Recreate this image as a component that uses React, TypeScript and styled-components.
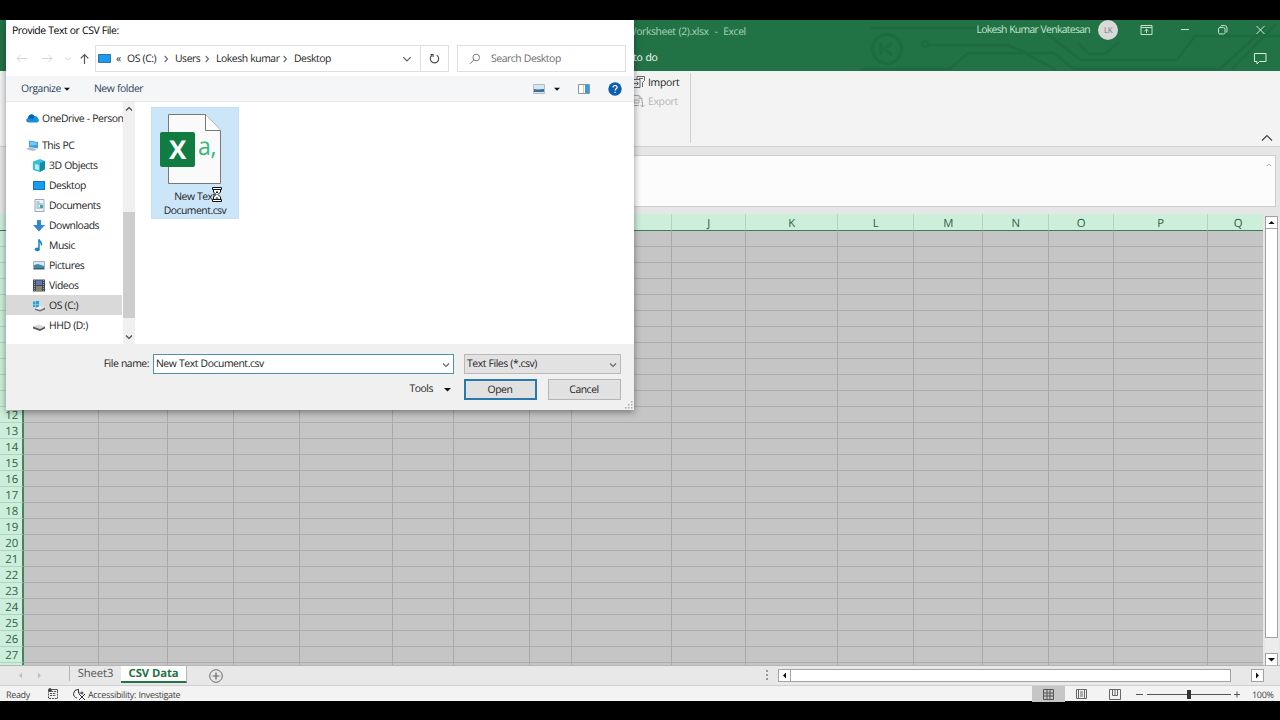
import React from "react";
import styled, { createGlobalStyle } from "styled-components";

const Global = createGlobalStyle`
  * { box-sizing: border-box; }
  html, body { margin: 0; padding: 0; background: #000; }
  body {
    font-family: "Open Sans", "Noto Sans", sans-serif;
    font-size: 10.4px;
    letter-spacing: -0.45px;
    word-spacing: 0.4px;
    text-rendering: geometricPrecision;
    color: #222;
    overflow: hidden;
  }
`;

const Screen = styled.div`
  position: relative;
  width: 1280px;
  height: 720px;
  padding: 20px 0 19px;
  background: #000;
  overflow: hidden;
`;
const Workbook = styled.div`
  display: flex;
  flex-direction: column;
  height: 681px;
  background: #e6e6e6;
`;

/* title bar and ribbon */
const Header = styled.header`
  position: relative;
  flex: none;
  height: 51px;
  background: #217346;
  color: #c5e3cf;
  overflow: hidden;
`;
const Circuit = styled.svg`
  position: absolute;
  inset: 0 0 auto auto;
`;
const TitleRow = styled.div`
  position: relative;
  display: flex;
  align-items: center;
  height: 20px;
  padding: 0 13px 0 627px;
`;
const FileTitle = styled.span`
  flex: 1;
  padding-top: 3px;
  color: #a9d3b9;
  letter-spacing: -0.4px;
  word-spacing: 0.6px;
  white-space: pre;
`;
const Account = styled.span`
  margin-right: 8px;
  letter-spacing: -0.68px;
  white-space: nowrap;
`;
const Avatar = styled.span`
  width: 20px;
  height: 20px;
  margin-right: 22px;
  border-radius: 50%;
  background: #d9d9d9;
  color: #777;
  font-size: 8px;
  line-height: 21px;
  text-align: center;
`;
const WindowIcons = styled.div`
  display: flex;
  gap: 26px;
  svg { display: block; }
`;
const TabRow = styled.div`
  position: relative;
  display: flex;
  align-items: center;
  justify-content: space-between;
  height: 31px;
  padding: 5px 13px 0 633px;
  color: #fff;
  line-height: 14px;
  letter-spacing: -0.2px;
`;
const Ribbon = styled.section`
  flex: none;
  display: flex;
  justify-content: space-between;
  height: 76px;
  padding: 2px 7px 4px 633px;
  background: #f3f3f3;
  border-bottom: 1px solid #d2d2d2;
`;
const RibbonGroup = styled.div`
  width: 58px;
  height: 70px;
  border-right: 1px solid #cfcfcf;
`;
const RibbonButton = styled.div<{ $off?: boolean }>`
  display: flex;
  align-items: center;
  gap: 3px;
  height: 19px;
  color: ${(p) => (p.$off ? "#b3b3b3" : "#222")};
  letter-spacing: -0.3px;
`;
const Collapse = styled.div`
  align-self: flex-end;
  height: 8px;
  svg { display: block; }
`;
const FormulaBar = styled.section`
  flex: none;
  height: 52px;
  margin: 8px 4px 7px 6px;
  padding: 6px 3px;
  display: flex;
  justify-content: flex-end;
  background: #fcfcfc;
  border: 1px solid #cdcdcd;
`;

/* sheet */
const SheetArea = styled.section`
  flex: none;
  display: flex;
  height: 451px;
`;
const Sheet = styled.div`
  width: 1263px;
  height: 451px;
  overflow: hidden;
`;
const Row = styled.div<{ $h?: number }>`
  display: grid;
  grid-template-columns: 24px 75px 69px 66px 66px 93px 61px 76px 42px 100px 74px 92px 76px 69px 66px 65px 94px 56px;
  grid-template-rows: ${(p) => p.$h ?? 16}px;
`;
const ColumnHead = styled.div`
  border-right: 1px solid #b4d3c1;
  border-bottom: 1px solid #3a7d57;
  background: #cdeedb;
  color: #2d5f45;
  font-size: 11.3px;
  line-height: 20px;
  text-align: center;
  &:last-child { padding-left: 5px; }
`;
const RowHead = styled.div`
  height: 16px;
  padding-right: 4px;
  border-right: 2px solid #43845c;
  border-bottom: 1px solid #aed5bf;
  background: #cdeedb;
  color: #2d5f45;
  font-size: 11.4px;
  letter-spacing: -0.2px;
  line-height: 18px;
  text-align: right;
`;
const Cell = styled.div`
  border-right: 1px solid #a9a9a9;
  border-bottom: 1px solid #adadad;
  background: #c5c5c5;
`;
const VScroll = styled.div`
  display: flex;
  flex-direction: column;
  width: 14px;
  margin: 2px 0 0 2px;
  background: #ececec;
`;
const ScrollButton = styled.div`
  display: flex;
  flex: none;
  align-items: center;
  justify-content: center;
  width: 13px;
  height: 13px;
  border: 1px solid #a3a3a3;
  background: #fff;
`;
const VThumb = styled.div`
  flex: none;
  width: 13px;
  height: 409px;
  margin-bottom: 15px;
  border: 1px solid #a3a3a3;
  border-top: 0;
  background: #fff;
`;

/* sheet tabs and status */
const SheetTabs = styled.nav`
  flex: none;
  display: flex;
  height: 20px;
  padding-left: 19px;
  background: #e8e8e8;
  border-top: 1px solid #b5b5b5;
  color: #555;
`;
const TabArrows = styled.div`
  width: 51px;
  padding-top: 6px;
  border-right: 1px solid #b5b5b5;
  height: 15px;
  svg { display: block; }
`;
const Tab = styled.div<{ $active?: boolean }>`
  width: ${(p) => (p.$active ? "66px" : "51px")};
  height: ${(p) => (p.$active ? "17px" : "16px")};
  background: ${(p) => (p.$active ? "#fff" : "transparent")};
  border-right: ${(p) => (p.$active ? "1px solid #b5b5b5" : "0")};
  border-bottom: ${(p) => (p.$active ? "2px solid #217346" : "0")};
  color: ${(p) => (p.$active ? "#217346" : "#555")};
  font-size: 11.3px;
  letter-spacing: -0.15px;
  font-weight: ${(p) => (p.$active ? 700 : 400)};
  line-height: 16px;
  text-align: center;
  white-space: nowrap;
`;
const AddSheet = styled.div`
  flex: 1;
  padding: 3px 0 0 22px;
  svg { display: block; }
`;
const HScroll = styled.div`
  display: flex;
  width: 514px;
  padding-top: 3px;
  svg { display: block; }
`;
const Grip = styled.div`
  width: 12px;
  padding-top: 1px;
`;
const HThumb = styled.div`
  width: 440px;
  height: 13px;
  margin-right: 20px;
  border: 1px solid #a3a3a3;
  border-left: 0;
  background: #fff;
`;
const Status = styled.footer`
  flex: none;
  display: flex;
  align-items: center;
  height: 16px;
  padding: 0 6px;
  background: #f3f3f3;
  border-top: 1px solid #d0d0d0;
  color: #444;
  font-size: 9px;
  letter-spacing: -0.33px;
  line-height: 14px;
  svg { display: block; }
`;
const StatusText = styled.span<{ $w: number }>`
  width: ${(p) => p.$w}px;
  padding-top: 2px;
  white-space: nowrap;
`;
const Spacer = styled.div`
  flex: 1;
`;
const ViewButton = styled.div<{ $on?: boolean }>`
  display: flex;
  align-items: center;
  justify-content: center;
  width: 33px;
  height: 16px;
  padding-top: 2px;
  background: ${(p) => (p.$on ? "#c6c6c6" : "transparent")};
`;
const Zoom = styled.div`
  width: 121px;
  padding: 2px 0 0 5px;
`;

/* file dialog */
const Dialog = styled.div`
  position: absolute;
  left: 6px;
  top: 20px;
  display: flex;
  flex-direction: column;
  width: 628px;
  height: 390px;
  background: #fff;
  box-shadow: 0 2px 7px rgba(0, 0, 0, 0.42);
  color: #222;
`;
const DialogTitle = styled.div`
  flex: none;
  height: 25px;
  padding: 3px 6px;
  color: #000;
  line-height: 16px;
`;
const NavBar = styled.div`
  flex: none;
  display: flex;
  height: 27px;
  margin-bottom: 4px;
  padding: 0 8px 0 10px;
`;
const NavArrows = styled.div`
  width: 79px;
  svg { display: block; }
`;
const Address = styled.div`
  display: flex;
  align-items: center;
  width: 354px;
  border: 1px solid #dedede;
  padding-left: 2px;
`;
const Crumbs = styled.div`
  display: flex;
  flex: 1;
  align-items: center;
  margin-left: 5px;
  line-height: 14px;
  white-space: nowrap;
  color: #222;
`;
const Crumb = styled.span<{ $w: number }>`
  width: ${(p) => p.$w}px;
`;
const Refresh = styled.div`
  display: flex;
  align-items: center;
  justify-content: center;
  width: 28px;
  height: 27px;
  border-left: 1px solid #dedede;
`;
const Search = styled.div`
  display: flex;
  flex: 1;
  align-items: center;
  gap: 10px;
  margin-left: 8px;
  padding-left: 11px;
  border: 1px solid #dedede;
  color: #6b6b6b;
`;
const Toolbar = styled.div`
  flex: none;
  display: flex;
  align-items: center;
  height: 26px;
  padding: 1px 12px 0 15px;
  background: #f5f6f7;
  border-bottom: 1px solid #e5e6e7;
  color: #2a4358;
`;
const ToolText = styled.span<{ $w: number }>`
  display: flex;
  align-items: center;
  gap: 3px;
  width: ${(p) => p.$w}px;
  white-space: nowrap;
`;
const ToolIcons = styled.div`
  display: flex;
  align-items: center;
  margin-left: auto;
`;
const Gap = styled.span<{ $w: number }>`
  width: ${(p) => p.$w}px;
`;
const Content = styled.div`
  display: flex;
  flex: none;
  height: 242px;
`;
const Tree = styled.div`
  width: 117px;
  padding: 6px 1px 0 0;
`;
const TreeItem = styled.div<{ $root?: boolean; $on?: boolean; $after?: number }>`
  display: flex;
  align-items: center;
  gap: 3px;
  height: 20px;
  margin-bottom: ${(p) => p.$after ?? 0}px;
  padding-top: 2px;
  padding-left: ${(p) => (p.$root ? 20 : 27)}px;
  background: ${(p) => (p.$on ? "#d9d9d9" : "transparent")};
  line-height: 14px;
  white-space: nowrap;
  svg {
    flex: none;
    margin-top: -1px;
  }
`;
const TreeScroll = styled.div`
  display: flex;
  flex-direction: column;
  justify-content: space-between;
  align-items: center;
  width: 12px;
  padding: 3px 0;
  background: #f0f0f0;
`;
const TreeThumb = styled.div`
  width: 12px;
  height: 106px;
  margin-top: 84px;
  background: #cdcdcd;
`;
const Files = styled.div`
  flex: 1;
  padding: 5px 0 0 16px;
`;
const FileTile = styled.div`
  position: relative;
  width: 88px;
  height: 112px;
  padding-top: 5px;
  border: 1px solid #c3e0f7;
  background: #cbe5f9;
  text-align: center;
  line-height: 13.5px;
  svg { display: block; }
`;
const FileName = styled.div`
  margin-top: 6px;
  letter-spacing: -0.5px;
`;
const Hourglass = styled.svg`
  position: absolute;
  left: 60px;
  top: 79px;
`;
const DialogFoot = styled.div`
  position: relative;
  display: flex;
  flex: 1;
  flex-direction: column;
  gap: 5px;
  padding: 10px 13px 0 0;
  background: #f0f0f0;
`;
const FootRow = styled.div`
  display: flex;
  justify-content: flex-end;
  align-items: center;
  line-height: 15px;
`;
const Field = styled.div<{ $w: number; $grey?: boolean }>`
  display: flex;
  align-items: center;
  justify-content: space-between;
  width: ${(p) => p.$w}px;
  height: 20px;
  margin-left: ${(p) => (p.$grey ? 10 : 4)}px;
  padding: 1px 3px 0 2px;
  border: 1px solid ${(p) => (p.$grey ? "#b9b9b9" : "#4d93ab")};
  background: ${(p) => (p.$grey ? "#e2e2e2" : "#fff")};
`;
const Button = styled.div<{ $primary?: boolean }>`
  width: 73px;
  height: 21px;
  margin-left: 11px;
  padding-right: 1px;
  border: ${(p) => (p.$primary ? "2px solid #2b78ad" : "1px solid #b5b5b5")};
  background: #e1e1e1;
  line-height: ${(p) => (p.$primary ? 18 : 20)}px;
  text-align: center;
`;
const Resize = styled.svg`
  position: absolute;
  right: 1px;
  bottom: 1px;
`;

const Chevron = ({ dir = "down", size = 8, color = "#666" }: { dir?: "down" | "up" | "right"; size?: number; color?: string }) => {
  const d = { down: "M1 2.5L4 5.5L7 2.5", up: "M1 5.5L4 2.5L7 5.5", right: "M2.7 1L5.5 4L2.7 7" }[dir];
  return (
    <svg width={size} height={size} viewBox="0 0 8 8" fill="none" stroke={color} strokeWidth="1.1">
      <path d={d} />
    </svg>
  );
};
const Caret = ({ dir = "down", color = "#111", size = 7 }: { dir?: "down" | "up" | "left" | "right"; color?: string; size?: number }) => {
  const d = { down: "M0 2h7L3.5 5.5z", up: "M0.5 5h6L3.5 2z", left: "M5 0.5v6L2 3.5z", right: "M2 0.5v6L5 3.5z" }[dir];
  return (
    <svg width={size} height={size} viewBox="0 0 7 7" fill={color}>
      <path d={d} />
    </svg>
  );
};

const treeIcons: Record<string, React.ReactNode> = {
  cloud: (
    <>
      <path d="M3 10.500C-.5 10.500-.8 6.700 2 6.200 2.400 3 5.800 1.500 8 4c2.400-.3 3.600.9 4 2.500 1.500.8 1.200 4-1.100 4z" fill="#1490df" />
      <path d="M2 6.200C2.400 2.300 6.200 1 8.300 3.900L7 7.500z" fill="#0364b8" />
    </>
  ),
  pc: (
    <>
      <path d="M3 1.500l9 1.500v6.500L3 8z" fill="#3ba0dc" />
      <path d="M4 2.500l7 1.200v2L4 6.500z" fill="#77c8f0" />
      <path d="M0 10l4-2 7 2.500-4 1.800z" fill="#b5bec6" />
    </>
  ),
  cube: (
    <>
      <path d="M0 2.500L7 0l5 2v8l-5 3-7-2z" fill="#37c0dc" />
      <path d="M7 4l5-2v8l-5 3z" fill="#1689a8" />
      <path d="M2 5l4 1v5l-4-1z" fill="#b5eff8" />
    </>
  ),
  desktop: (
    <>
      <path d="M0 2h12v9H0z" fill="#0a76c8" />
      <path d="M1 3h10v7H1z" fill="#1a9bf0" />
    </>
  ),
  doc: (
    <>
      <path d="M2 .5h9v12H2z" fill="#eef4f7" stroke="#97a9b4" />
      <path d="M3.500 3h3M3.500 5h6M3.500 7h2M3.500 9h6" stroke="#6c9fb5" />
      <path d="M7 6h3v3H7z" fill="#4ba3a8" />
    </>
  ),
  down: <path d="M4 1h4v5h4l-6 6.500L0 6h4z" fill="#3387cc" />,
  music: (
    <>
      <path d="M6 .5c.5 2.500 3.500 3 2.500 6" fill="none" stroke="#1583c4" strokeWidth="1.600" />
      <path d="M6 .5v9" stroke="#1583c4" strokeWidth="1.500" />
      <ellipse cx="4.300" cy="10.300" rx="2.500" ry="1.900" fill="#1583c4" />
    </>
  ),
  picture: (
    <>
      <path d="M.5 2.500h11v8H.5z" fill="#d6eaf5" stroke="#a3b3bd" />
      <path d="M1 6l4-1 6 2v3H1z" fill="#4a88a8" />
      <path d="M1 9h10v1H1z" fill="#2d5f79" />
    </>
  ),
  video: (
    <>
      <path d="M0 .5h12v12H0z" fill="#3d4a5c" />
      <path d="M3 1.500h6v4.500H3z" fill="#6475a8" />
      <path d="M3 7h6v5H3z" fill="#8d8068" />
      <path d="M1.500 1v11M10.500 1v11" stroke="#9aa2ae" strokeDasharray="1 1" />
    </>
  ),
  os: (
    <>
      <path d="M0 2.500h2.500v2.500H0zM3 2h3v3H3zM0 5.500h2.500V8H0zM3 5.500h3v3H3z" fill="#20a4dd" />
      <path d="M2 9.500l5-2.500 5 1.500v2L7 12z" fill="#e8ecf0" />
      <path d="M2 9.500L7 11l5-2.500v2L7 12.500 2 11z" fill="#66727a" />
    </>
  ),
  drive: (
    <>
      <path d="M0 7.500L5 5.500l7 2-5 2.500z" fill="#d8d8d8" />
      <path d="M0 7.500L7 10l5-2.500v2L7 12 0 9.500z" fill="#595959" />
    </>
  ),
};
const TreeIcon = ({ name }: { name: string }) => (
  <svg width="13" height="13" viewBox="0 0 13 13">
    {treeIcons[name]}
  </svg>
);

const tree = [
  { icon: "cloud", label: "OneDrive - Person", root: true, after: 7 },
  { icon: "pc", label: "This PC", root: true },
  { icon: "cube", label: "3D Objects" },
  { icon: "desktop", label: "Desktop" },
  { icon: "doc", label: "Documents" },
  { icon: "down", label: "Downloads" },
  { icon: "music", label: "Music" },
  { icon: "picture", label: "Pictures" },
  { icon: "video", label: "Videos" },
  { icon: "os", label: "OS (C:)", on: true },
  { icon: "drive", label: "HHD (D:)" },
];
const crumbs = [
  { label: "OS (C:)", w: 35 },
  { label: "Users", w: 28 },
  { label: "Lokesh kumar", w: 65 },
];
const columns = "ABCDEFGHIJKLMNOPQ".split("");
const rows = Array.from({ length: 28 }, (_, i) => i + 1);

const FileDialog = () => (
  <Dialog>
    <DialogTitle>Provide Text or CSV File:</DialogTitle>
    <NavBar>
      <NavArrows>
        <svg width="79" height="27" viewBox="0 0 79 27" fill="none" stroke="#d5d5d5">
          <path d="M11 13.500H1M4.500 10L1 13.500l3.500 3.500M26 13.500h10M32.500 10l3.500 3.500-3.500 3.500" />
          <path d="M49 12.500l3 2.500 3-2.500" />
          <path d="M68.500 19V9.500M64.700 13.300l3.800-3.800 3.800 3.800" stroke="#555" strokeWidth="1.200" />
        </svg>
      </NavArrows>
      <Address>
        <svg width="13" height="10" viewBox="0 0 13 10">
          <path d="M.5.5h12v8H.5z" fill="#1a9bf0" stroke="#3274a0" />
        </svg>
        <Crumbs>
          <Gap $w={11}>«</Gap>
          {crumbs.map((c) => (
            <React.Fragment key={c.label}>
              <Crumb $w={c.w}>{c.label}</Crumb>
              <Chevron dir="right" />
              <Gap $w={5} />
            </React.Fragment>
          ))}
          <span>Desktop</span>
        </Crumbs>
        <Chevron size={10} />
        <Gap $w={8} />
        <Refresh>
          <svg width="11" height="11" viewBox="0 0 11 11" fill="none" stroke="#444" strokeWidth="1.100">
            <path d="M7.600 2.100a4.200 4.200 0 1 1-4.600.2M1.500 1.500h2.600v2.600" />
          </svg>
        </Refresh>
      </Address>
      <Search>
        <svg width="12" height="12" viewBox="0 0 12 12" fill="none" stroke="#777">
          <circle cx="7.200" cy="4.500" r="3.300" />
          <path d="M4.800 7L1 10.800" />
        </svg>
        Search Desktop
      </Search>
    </NavBar>
    <Toolbar>
      <ToolText $w={73}>Organize <Caret size={6} /></ToolText>
      <ToolText $w={60}>New folder</ToolText>
      <ToolIcons>
        <svg width="12" height="10" viewBox="0 0 12 10">
          <path d="M.5.5h11v9H.5z" fill="#d6e8f3" stroke="#b0bdc6" />
          <path d="M1 5l4 .5 6-.5v3H1z" fill="#3d6f92" />
        </svg>
        <Gap $w={9} />
        <Caret size={6} />
        <Gap $w={18} />
        <svg width="12" height="10" viewBox="0 0 12 10">
          <path d="M.5.5h11v9H.5z" fill="#fff" stroke="#8798a5" />
          <path d="M7 1h4v8H7z" fill="#3b9bdc" />
          <path d="M5 1h1v8H5z" fill="#e4c9a2" />
        </svg>
        <Gap $w={18} />
        <svg width="14" height="14" viewBox="0 0 14 14">
          <circle cx="7" cy="7" r="6.700" fill="#0c5fae" />
          <path d="M5 5.500c0-2.800 4.200-2.500 4.100-.1C9 6.800 7.100 6.900 7.100 8.500M7.100 9.800v1.300" fill="none" stroke="#fff" strokeWidth="1.200" />
        </svg>
      </ToolIcons>
    </Toolbar>
    <Content>
      <Tree>
        {tree.map((t) => (
          <TreeItem key={t.label} $root={t.root} $on={t.on} $after={t.after}>
            <TreeIcon name={t.icon} />
            {t.label}
          </TreeItem>
        ))}
      </Tree>
      <TreeScroll>
        <Chevron dir="up" color="#444" />
        <TreeThumb />
        <Chevron color="#444" />
      </TreeScroll>
      <Files>
        <FileTile>
          <svg width="86" height="72" viewBox="0 0 86 72">
            <path d="M16.500 1.500h37l15 16v53h-52z" fill="#fafafa" stroke="#777" />
            <path d="M53.500 1.500v16h15" fill="#fff" stroke="#777" />
            <rect x="8" y="19" width="35" height="35" rx="2" fill="#107c41" />
            <text x="25.500" y="45.500" fill="#fff" fontSize="26" fontWeight="700" textAnchor="middle">X</text>
            <text x="46" y="42" fill="#33b878" fontSize="25" textLength="18" lengthAdjust="spacingAndGlyphs">a,</text>
          </svg>
          <FileName>New Text<br />Document.csv</FileName>
          <Hourglass width="10" height="15" viewBox="0 0 10 15">
            <path d="M.5.5h9v2h-1v2.500L6 7.500l2.500 2.500v2.500h1v2h-9v-2h1v-2.500L4 7.500 1.500 5v-2.500h-1z" fill="#fff" stroke="#111" />
            <path d="M1 2.500h8M1 12.500h8M4 11.500l1-1 1 1M4 5h2L5 6z" fill="#111" stroke="#111" />
          </Hourglass>
        </FileTile>
      </Files>
    </Content>
    <DialogFoot>
      <FootRow>
        File name:
        <Field $w={301}>New Text Document.csv <Chevron /></Field>
        <Field $w={157} $grey>Text Files (*.csv) <Chevron /></Field>
      </FootRow>
      <FootRow>
        Tools
        <Gap $w={11} />
        <Caret />
        <Gap $w={2} />
        <Button $primary>Open</Button>
        <Button>Cancel</Button>
      </FootRow>
      <Resize width="8" height="8" viewBox="0 0 8 8" fill="#aaa">
        <path d="M6 0h1.500v1.500H6zM6 3h1.500v1.500H6zM6 6h1.500v1.500H6zM3 3h1.500v1.500H3zM3 6h1.500v1.500H3zM0 6h1.500v1.500H0z" />
      </Resize>
    </DialogFoot>
  </Dialog>
);

const App = () => (
  <>
    <Global />
    <Screen>
      <Workbook>
        <Header>
          <Circuit width="420" height="51" viewBox="860 20 420 51" fill="none" stroke="#1d6b3f" strokeWidth="2.500">
            <circle cx="887" cy="49" r="14.500" strokeWidth="3" />
            <path d="M881 43v12M892 43l-8 6 8 6" strokeWidth="3" />
            <path d="M870 28h112" />
            <circle cx="925" cy="44" r="3" />
            <path d="M928 45h80l14 6 34 19" />
            <path d="M860 69h90l18-16h86l20 16h146l46-42" />
            <path d="M1046 33l35 27h96l18-24h85" />
            <path d="M1077 42l12 12h16l14-12" />
            <path d="M1232 69l44-45" />
          </Circuit>
          <TitleRow>
            <FileTitle>Worksheet (2).xlsx  -  Excel</FileTitle>
            <Account>Lokesh Kumar Venkatesan</Account>
            <Avatar>LK</Avatar>
            <WindowIcons>
              <svg width="13" height="12" viewBox="0 0 13 12" fill="none" stroke="#c5e3cf">
                <path d="M1 1.500h11v9H1zM1 3.500h11M6.500 9V5.300M4.500 7l2-1.900 2 1.900" />
              </svg>
              <svg width="12" height="12" viewBox="0 0 12 12" fill="none" stroke="#c5e3cf">
                <path d="M2 5.500h8" />
              </svg>
              <svg width="12" height="12" viewBox="0 0 12 12" fill="none" stroke="#c5e3cf">
                <rect x="1.500" y="3.500" width="6.500" height="6.500" rx="1.500" />
                <path d="M3.500 2.500q.5-1 1.500-1h2.500q2.500 0 2.500 2.500V7q0 1-1 1.500" />
              </svg>
              <svg width="12" height="12" viewBox="0 0 12 12" fill="none" stroke="#d8eddf">
                <path d="M1.500 2l8 8M9.500 2l-8 8" />
              </svg>
            </WindowIcons>
          </TitleRow>
          <TabRow>
            to do
            <svg width="14" height="13" viewBox="0 0 14 13" fill="none" stroke="#d8eddf">
              <path d="M1.500 1.500h11.500v8H6.500L4 12V9.500H1.500z" />
            </svg>
          </TabRow>
        </Header>
        <Ribbon>
          <RibbonGroup>
            <RibbonButton>
              <svg width="12" height="13" viewBox="0 0 12 13" fill="none" stroke="#666">
                <path d="M4 3V.500h7.500v4l-2 2V11M0 3.500h7v8H0M1 7.500h4M3.500 5.500l2 2-2 2M6 2.500h4" />
              </svg>
              Import
            </RibbonButton>
            <RibbonButton $off>
              <svg width="12" height="13" viewBox="0 0 12 13" fill="none" stroke="#aaa">
                <path d="M0 .5h6l3 3V8M0 10.500h6M6 .5v3h3M1 5h5v3H1zM9.500 7v5M7.500 10l2 2 2-2" />
              </svg>
              Export
            </RibbonButton>
          </RibbonGroup>
          <Collapse>
            <svg width="12" height="8" viewBox="0 0 12 8" fill="none" stroke="#444" strokeWidth="1.200">
              <path d="M1 6.500l5-5 5 5" />
            </svg>
          </Collapse>
        </Ribbon>
        <FormulaBar>
          <Chevron dir="up" size={6} color="#999" />
        </FormulaBar>
        <SheetArea>
          <Sheet>
            <Row $h={17}>
              <ColumnHead />
              {columns.map((c) => (
                <ColumnHead key={c}>{c}</ColumnHead>
              ))}
            </Row>
            {rows.map((r) => (
              <Row key={r}>
                <RowHead>{r < 28 ? r : ""}</RowHead>
                {columns.map((c) => (
                  <Cell key={c} />
                ))}
              </Row>
            ))}
          </Sheet>
          <VScroll>
            <ScrollButton><Caret dir="up" /></ScrollButton>
            <VThumb />
            <ScrollButton><Caret /></ScrollButton>
          </VScroll>
        </SheetArea>
        <SheetTabs>
          <TabArrows>
            <svg width="24" height="7" viewBox="0 0 24 7" fill="#c0c0c0">
              <path d="M3 .5v6L0 3.500zM19 .5v6l3-3z" />
            </svg>
          </TabArrows>
          <Tab>Sheet3</Tab>
          <Tab $active>CSV Data</Tab>
          <AddSheet>
            <svg width="14" height="14" viewBox="0 0 14 14" fill="none" stroke="#666">
              <circle cx="7" cy="7" r="6.300" />
              <path d="M7 3.500v7M3.500 7h7" strokeWidth="1.200" />
            </svg>
          </AddSheet>
          <HScroll>
            <Grip>
              <svg width="3" height="10" viewBox="0 0 3 10" fill="#999">
                <path d="M0 0h2v2H0zM0 4h2v2H0zM0 8h2v2H0z" />
              </svg>
            </Grip>
            <ScrollButton><Caret dir="left" /></ScrollButton>
            <HThumb />
            <ScrollButton><Caret dir="right" /></ScrollButton>
          </HScroll>
        </SheetTabs>
        <Status>
          <StatusText $w={42}>Ready</StatusText>
          <svg width="10" height="11" viewBox="0 0 10 11" fill="none" stroke="#555">
            <path d="M.5 3.500h9v7h-9zM2 5.500h6M2 7.500h6" strokeDasharray="2 .8" />
            <circle cx="2" cy="2" r="1.500" fill="#333" />
            <path d="M4 1.500h5.500v2" />
          </svg>
          <Gap $w={15} />
          <svg width="13" height="12" viewBox="0 0 13 12" fill="none" stroke="#333">
            <path d="M5 1.500A4.300 4.300 0 0 0 4 10M5.500 1v4h5M9 3.500v3M6 6l6 6M12 6l-6 6" />
          </svg>
          <Gap $w={2} />
          <StatusText $w={100}>Accessibility: Investigate</StatusText>
          <Spacer />
          <ViewButton $on>
            <svg width="11" height="11" viewBox="0 0 11 11" fill="none" stroke="#555">
              <path d="M.5.500h10v10H.5zM.5 4h10M.5 7h10M4 .5v10M7 .5v10" />
            </svg>
          </ViewButton>
          <ViewButton>
            <svg width="11" height="11" viewBox="0 0 11 11" fill="none" stroke="#666">
              <path d="M.5.500h10v9H.5zM2.500.5v9M8.500.5v9M4 3h3M4 5h3M4 7h3" />
            </svg>
          </ViewButton>
          <ViewButton>
            <svg width="12" height="11" viewBox="0 0 12 11" fill="none" stroke="#666">
              <path d="M.5.500h11v10H.5zM3.500.5v6h5v-6M6 .5v6" />
            </svg>
          </ViewButton>
          <Zoom>
            <svg width="107" height="11" viewBox="0 0 107 11" stroke="#555">
              <path d="M0 5.500h7M11 5.500h84M98 5.500h6M101 2.500v6" />
              <path d="M51 1h4v9h-4z" fill="#333" stroke="none" />
            </svg>
          </Zoom>
          <StatusText $w={22}>100%</StatusText>
        </Status>
      </Workbook>
      <FileDialog />
    </Screen>
  </>
);

export default App;
